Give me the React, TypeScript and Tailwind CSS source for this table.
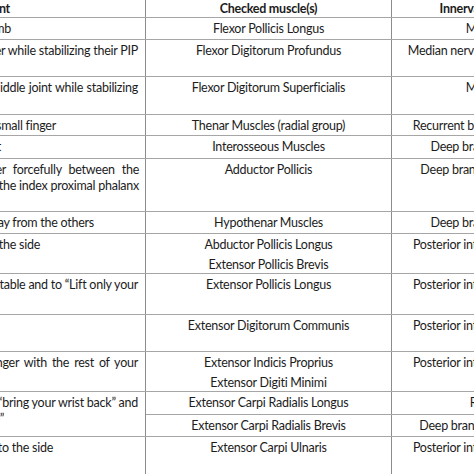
import React from "react";

type Line = { t: string; cls: string };
type Row = { h: string; left: Line[]; mid: string[]; right: string };

// first column is cut off on the left, only the line ends show
const rows: Row[] = [
  { h: "h-[22px]", left: [{ t: "Flex the tip of your thumb", cls: "pr-[134px]" }], mid: ["Flexor Pollicis Longus"], right: "Median nerve" },
  {
    h: "h-[37px]",
    left: [
      { t: "Bend the tip of your finger while stabilizing their PIP", cls: "pr-[7px]" },
      { t: "joint", cls: "pr-[160px]" },
    ],
    mid: ["Flexor Digitorum Profundus"],
    right: "Median nerve (AIN) and Ulnar nerve",
  },
  {
    h: "h-[38px]",
    left: [
      { t: "Bend your finger at the middle joint while stabilizing", cls: "pr-[7px] [word-spacing:0.5px]" },
      { t: "the others", cls: "pr-[160px]" },
    ],
    mid: ["Flexor Digitorum Superficialis"],
    right: "Median nerve",
  },
  { h: "h-[21px]", left: [{ t: "Touch your thumb to your small finger", cls: "pr-[89px]" }], mid: ["Thenar Muscles (radial group)"], right: "Recurrent branch of median nerve" },
  { h: "h-[23px]", left: [{ t: "Spread your fingers apart", cls: "pr-[144px]" }], mid: ["Interosseous Muscles"], right: "Deep branch of ulnar nerve" },
  {
    h: "h-[53px]",
    left: [
      { t: "Hold a piece of paper forcefully between the", cls: "pr-[6px] [word-spacing:4px]" },
      { t: "thumb and the radial side of the index proximal phalanx", cls: "pr-[6px]" },
    ],
    mid: ["Adductor Pollicis"],
    right: "Deep branch of the ulnar nerve",
  },
  { h: "h-[22px]", left: [{ t: "Move your small finger away from the others", cls: "pr-[51px]" }], mid: ["Hypothenar Muscles"], right: "Deep branch of ulnar nerve" },
  { h: "h-[40px]", left: [{ t: "Move your thumb out to the side", cls: "pr-[105px]" }], mid: ["Abductor Pollicis Longus", "Extensor Pollicis Brevis"], right: "Posterior interosseous nerve (PIN)" },
  {
    h: "h-[41px]",
    left: [
      { t: "Place your hand flat on the table and to \u201cLift only your", cls: "pr-[7px]" },
      { t: "thumb\u201d", cls: "pr-[160px]" },
    ],
    mid: ["Extensor Pollicis Longus"],
    right: "Posterior interosseous nerve (PIN)",
  },
  { h: "h-[37px]", left: [{ t: "Straighten your fingers", cls: "pr-[160px]" }], mid: ["Extensor Digitorum Communis"], right: "Posterior interosseous nerve (PIN)" },
  {
    h: "h-[40px]",
    left: [
      { t: "Point your index and small finger with the rest of your", cls: "pr-[7px] [word-spacing:2px]" },
      { t: "fingers in a fist", cls: "pr-[160px]" },
    ],
    mid: ["Extensor Indicis Proprius", "Extensor Digiti Minimi"],
    right: "Posterior interosseous nerve (PIN)",
  },
];

const tail: Row = { h: "h-[50px]", left: [{ t: "Bring your wrist back and out to the side", cls: "pr-[92px]" }], mid: ["Extensor Carpi Ulnaris"], right: "Posterior interosseous nerve (PIN)" };

function LeftCell({ lines }: { lines: Line[] }) {
  return (
    <div className="w-[301px] shrink-0 border-r border-[#8c8c8c] pt-[3px] leading-[16px] overflow-hidden">
      {lines.map((l, i) => (
        <div key={i} className={`flex justify-end whitespace-nowrap ${l.cls}`}>
          <span>{l.t}</span>
        </div>
      ))}
    </div>
  );
}

function MidCell({ items }: { items: string[] }) {
  return (
    <div className="w-[246px] shrink-0 border-r border-[#8c8c8c] pt-[1px] leading-[20px] text-center">
      {items.map((m) => (
        <div key={m}>{m}</div>
      ))}
    </div>
  );
}

function RightCell({ text }: { text: string }) {
  return <div className="w-[220px] shrink-0 pt-[1px] leading-[20px] text-center whitespace-nowrap">{text}</div>;
}

function TableRow({ row, last }: { row: Row; last?: boolean }) {
  return (
    <div className={`flex ${row.h} ${last ? "" : "border-b border-[#a6a6a6]"}`}>
      <LeftCell lines={row.left} />
      <MidCell items={row.mid} />
      <RightCell text={row.right} />
    </div>
  );
}

export default function App() {
  return (
    <div className="w-[474px] h-[474px] overflow-hidden bg-white text-[#1c1c1c] text-[12.5px] tracking-[-0.25px] font-['Lato',sans-serif]">
      <div className="ml-[-155px] w-[767px] flex flex-col">
        {/* Header */}
        <div className="flex h-[18px] border-b border-[#a6a6a6] font-bold leading-[17px]">
          <div className="w-[301px] shrink-0 border-r border-[#8c8c8c] flex justify-end pr-[135px] whitespace-nowrap overflow-hidden">
            <span>Instruction given to the patient</span>
          </div>
          <div className="w-[246px] shrink-0 border-r border-[#8c8c8c] text-center">Checked muscle(s)</div>
          <div className="w-[220px] shrink-0 text-center whitespace-nowrap">Innervating nerve (root)</div>
        </div>

        {rows.map((r, i) => (
          <TableRow key={i} row={r} />
        ))}

        {/* wrist extensors share one instruction */}
        <div className="flex h-[45px] border-b border-[#a6a6a6]">
          <LeftCell
            lines={[
              { t: "Make a fist and to \u201cbring your wrist back\u201d and", cls: "pr-[7px]" },
              { t: "to the thumb side\u201d", cls: "pr-[141px]" },
            ]}
          />
          <div className="flex flex-col">
            <div className="flex h-[23px] border-b border-[#a6a6a6]">
              <MidCell items={["Extensor Carpi Radialis Longus"]} />
              <RightCell text="Radial nerve" />
            </div>
            <div className="flex h-[22px]">
              <MidCell items={["Extensor Carpi Radialis Brevis"]} />
              <RightCell text="Deep branch of the radial nerve" />
            </div>
          </div>
        </div>

        <TableRow row={tail} last />
      </div>
    </div>
  );
}
